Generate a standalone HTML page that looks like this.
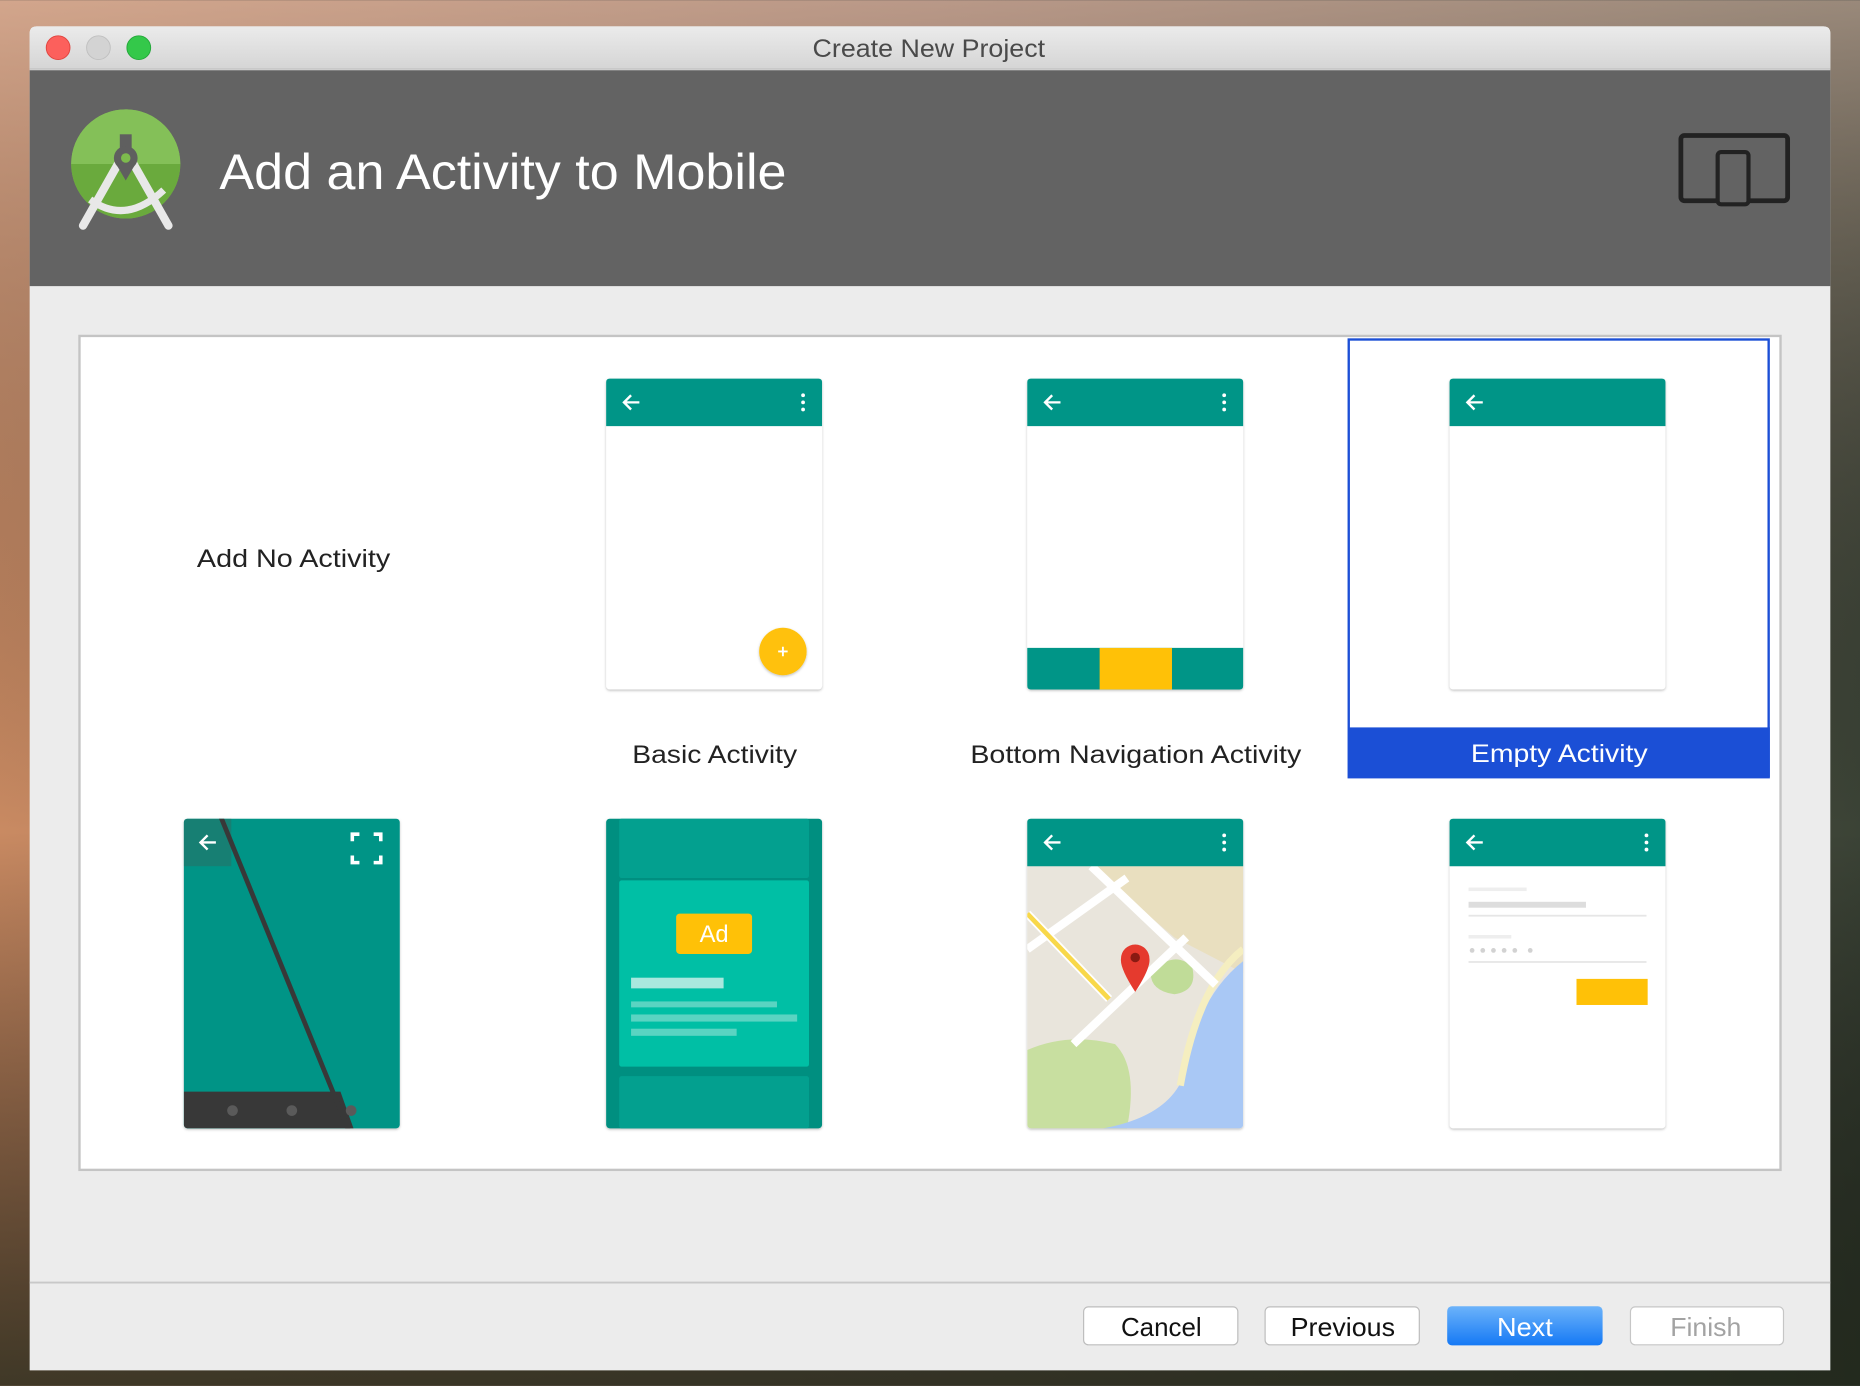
<!DOCTYPE html>
<html><head><meta charset="utf-8"><style>
html,body{margin:0;padding:0;width:1860px;height:1386px;overflow:hidden;background:#555}
svg{display:block}
text{font-family:"Liberation Sans",sans-serif}
</style></head><body>
<svg width="1860" height="1386" viewBox="0 0 1568 1168" xmlns="http://www.w3.org/2000/svg">
<defs>
<linearGradient id="bg" x1="0" y1="0" x2="1" y2="0">
<stop offset="0" stop-color="#c98a62"/><stop offset="0.5" stop-color="#8a6a58"/><stop offset="1" stop-color="#3b4336"/>
</linearGradient>
<linearGradient id="bgv" x1="0" y1="0" x2="0" y2="1">
<stop offset="0" stop-color="#d9b8a8" stop-opacity="0.6"/><stop offset="0.6" stop-color="#000" stop-opacity="0"/><stop offset="1" stop-color="#1d2418" stop-opacity="0.8"/>
</linearGradient>
<linearGradient id="tb" x1="0" y1="0" x2="0" y2="1"><stop offset="0" stop-color="#ebebeb"/><stop offset="1" stop-color="#d5d5d5"/></linearGradient>
<linearGradient id="nx" x1="0" y1="0" x2="0" y2="1"><stop offset="0" stop-color="#6cb3fa"/><stop offset="1" stop-color="#1579f5"/></linearGradient>
<filter id="sh" x="-10%" y="-10%" width="120%" height="120%"><feDropShadow dx="0" dy="1" stdDeviation="1.2" flood-color="#000" flood-opacity="0.25"/></filter>
<clipPath id="c1"><rect x="155" y="690" width="182" height="261" rx="3"/></clipPath>
<clipPath id="c3"><rect x="866" y="690" width="182" height="261" rx="3"/></clipPath>
</defs>
<rect width="1568" height="1168" fill="url(#bg)"/>
<rect width="1568" height="1168" fill="url(#bgv)"/>
<path d="M25,28 Q25,22 31,22 H1537 Q1543,22 1543,28 V1155 H25 Z" fill="#ececec"/>
<path d="M25,28 Q25,22 31,22 H1537 Q1543,22 1543,28 V58 H25 Z" fill="url(#tb)"/>
<line x1="25" y1="58" x2="1543" y2="58" stroke="#bdbdbd"/>
<circle cx="49" cy="40" r="10" fill="#fc605c" stroke="#e0443e" stroke-width="0.8"/>
<circle cx="83" cy="40" r="10" fill="#d3d3d3" stroke="#c0c0c0" stroke-width="0.8"/>
<circle cx="117" cy="40" r="10" fill="#34c84a" stroke="#24a83a" stroke-width="0.8"/>
<text x="685" y="48" font-size="21" fill="#4a4a4a" textLength="196" lengthAdjust="spacingAndGlyphs">Create New Project</text>
<rect x="25" y="59" width="1518" height="182" fill="#636363"/>
<circle cx="106" cy="138" r="46" fill="#7dbb4d"/>
<path d="M60,138 A46,46 0 0 0 152,138 Z" fill="#6aaa3d"/>
<path d="M60,138 A46,46 0 0 1 152,138 Z" fill="#84c058"/>
<path d="M104,130 L70,190" stroke="#e8e8e8" stroke-width="7" stroke-linecap="round"/>
<path d="M108,130 L142,190" stroke="#e8e8e8" stroke-width="7" stroke-linecap="round"/>
<path d="M76,168 Q106,190 138,160" stroke="#e8e8e8" stroke-width="6" fill="none"/>
<rect x="101" y="113" width="10" height="12" fill="#5f5f5f"/>
<circle cx="106" cy="133" r="10" fill="#5f5f5f"/><circle cx="106" cy="133" r="4" fill="#7dbb4d"/>
<path d="M99,140 L106,152 L113,140 Z" fill="#5f5f5f"/>
<text x="185" y="159" font-size="42" fill="#fff" textLength="478" lengthAdjust="spacingAndGlyphs">Add an Activity to Mobile</text>
<rect x="1417" y="114" width="90" height="55" rx="3" fill="none" stroke="#222" stroke-width="4"/>
<rect x="1448" y="128" width="26" height="44" rx="3" fill="#636363" stroke="#222" stroke-width="3.5"/>
<rect x="67" y="283" width="1434" height="703" fill="#fff" stroke="#c4c4c4" stroke-width="2"/>
<rect x="1137" y="286" width="354" height="369" fill="#fff" stroke="#1c4fd6" stroke-width="2"/>
<rect x="1137" y="613" width="355" height="42" fill="#1b4fd6"/>
<text x="1240" y="642" font-size="21" fill="#fff" textLength="149" lengthAdjust="spacingAndGlyphs">Empty Activity</text>
<text x="166" y="478" font-size="21" fill="#222" textLength="163" lengthAdjust="spacingAndGlyphs">Add No Activity</text>
<text x="533" y="643" font-size="21" fill="#222" textLength="139" lengthAdjust="spacingAndGlyphs">Basic Activity</text>
<text x="818" y="643" font-size="21" fill="#222" textLength="279" lengthAdjust="spacingAndGlyphs">Bottom Navigation Activity</text>
<g filter="url(#sh)"><rect x="511" y="319" width="182" height="262" rx="3" fill="#fff"/></g>
<path d="M514,319 H690 Q693,319 693,322 V359 H511 V322 Q511,319 514,319Z" fill="#009587"/>
<path d="M539,339 H526 M532,333 L526,339 L532,345" stroke="#fff" stroke-width="2" fill="none"/>
<g fill="#fff"><circle cx="677" cy="333" r="1.6"/><circle cx="677" cy="339" r="1.6"/><circle cx="677" cy="345" r="1.6"/></g>
<circle cx="660" cy="549" r="20" fill="#ffc107" filter="url(#sh)"/>
<path d="M656,549 H664 M660,545 V553" stroke="#fff" stroke-width="1.6"/>
<g filter="url(#sh)"><rect x="866" y="319" width="182" height="262" rx="3" fill="#fff"/></g>
<path d="M869,319 H1045 Q1048,319 1048,322 V359 H866 V322 Q866,319 869,319Z" fill="#009587"/>
<path d="M894,339 H881 M887,333 L881,339 L887,345" stroke="#fff" stroke-width="2" fill="none"/>
<g fill="#fff"><circle cx="1032" cy="333" r="1.6"/><circle cx="1032" cy="339" r="1.6"/><circle cx="1032" cy="345" r="1.6"/></g>
<path d="M866,546 H1048 V578 Q1048,581 1045,581 H869 Q866,581 866,578Z" fill="#009587"/>
<rect x="927" y="546" width="61" height="35" fill="#ffc107"/>
<g filter="url(#sh)"><rect x="1222" y="319" width="182" height="262" rx="3" fill="#fff"/></g>
<path d="M1225,319 H1401 Q1404,319 1404,322 V359 H1222 V322 Q1222,319 1225,319Z" fill="#009587"/>
<path d="M1250,339 H1237 M1243,333 L1237,339 L1243,345" stroke="#fff" stroke-width="2" fill="none"/>
<g filter="url(#sh)"><rect x="155" y="690" width="182" height="261" rx="3" fill="#049486"/></g>
<g clip-path="url(#c1)">
<rect x="155" y="690" width="40" height="40" fill="#177f73"/>
<path d="M155,920 H287 L298,951 H155Z" fill="#383838"/>
<line x1="186" y1="688" x2="294" y2="953" stroke="#383838" stroke-width="4"/>
<g fill="#5a5a5a"><circle cx="196" cy="936" r="4.5"/><circle cx="246" cy="936" r="4.5"/><circle cx="296" cy="936" r="4.5"/></g>
</g>
<path d="M182,710 H169 M175,704 L169,710 L175,716" stroke="#fff" stroke-width="2" fill="none"/>
<path d="M297,709 V703 H303 M315,703 H321 V709 M321,721 V727 H315 M303,727 H297 V721" stroke="#fff" stroke-width="3" fill="none"/>
<g filter="url(#sh)"><rect x="511" y="690" width="182" height="261" rx="3" fill="#008f80"/></g>
<rect x="522" y="690" width="160" height="50" rx="2" fill="#03a08f"/>
<rect x="522" y="907" width="160" height="44" rx="2" fill="#03a08f"/>
<rect x="522" y="742" width="160" height="157" rx="2" fill="#00bfa5"/>
<rect x="570" y="770" width="64" height="34" rx="3" fill="#ffc107"/>
<text x="602" y="794" font-size="20" fill="#fff" text-anchor="middle">Ad</text>
<rect x="532" y="824" width="78" height="9" fill="#a8e8de"/>
<rect x="532" y="844" width="123" height="5" fill="#5ad4c2"/>
<rect x="532" y="855" width="140" height="6" fill="#5ad4c2"/>
<rect x="532" y="867" width="89" height="6" fill="#5ad4c2"/>
<g filter="url(#sh)"><rect x="866" y="690" width="182" height="261" rx="3" fill="#e9e5dc"/></g>
<g clip-path="url(#c3)">
<path d="M920,730 H1048 V820 L990,790 Z" fill="#e9dfbf"/>
<path d="M866,885 Q900,870 940,880 Q960,900 950,951 H866Z" fill="#c8dfa0"/>
<path d="M1048,810 Q1010,840 1000,900 Q990,940 930,951 H1048Z" fill="#a9c8f5"/>
<path d="M1048,800 Q1010,830 995,915" stroke="#f5eec0" stroke-width="6" fill="none"/>
<path d="M970,820 Q990,800 1005,815 Q1010,835 990,838 Q970,835 970,820Z" fill="#c0dc98"/>
<path d="M920,730 L1025,830 M866,800 L950,740 M866,770 L935,842 M905,880 L1000,790" stroke="#fff" stroke-width="7" fill="none"/>
<path d="M866,770 L935,842" stroke="#f8d84a" stroke-width="4"/>
</g>
<path d="M869,690 H1045 Q1048,690 1048,693 V730 H866 V693 Q866,690 869,690Z" fill="#009587"/>
<path d="M894,710 H881 M887,704 L881,710 L887,716" stroke="#fff" stroke-width="2" fill="none"/>
<g fill="#fff"><circle cx="1032" cy="704" r="1.6"/><circle cx="1032" cy="710" r="1.6"/><circle cx="1032" cy="716" r="1.6"/></g>
<path d="M957,836 Q944,816 945,808 A12,12 0 1 1 969,808 Q970,816 957,836Z" fill="#e53a2e"/>
<circle cx="957" cy="807" r="4" fill="#8a1a12"/>
<g filter="url(#sh)"><rect x="1222" y="690" width="182" height="261" rx="3" fill="#fff"/></g>
<path d="M1225,690 H1401 Q1404,690 1404,693 V730 H1222 V693 Q1222,690 1225,690Z" fill="#009587"/>
<path d="M1250,710 H1237 M1243,704 L1237,710 L1243,716" stroke="#fff" stroke-width="2" fill="none"/>
<g fill="#fff"><circle cx="1388" cy="704" r="1.6"/><circle cx="1388" cy="710" r="1.6"/><circle cx="1388" cy="716" r="1.6"/></g>
<rect x="1238" y="748" width="49" height="3" fill="#eee"/>
<rect x="1238" y="760" width="99" height="5" fill="#ddd"/>
<rect x="1238" y="771" width="150" height="1.5" fill="#e6e6e6"/>
<rect x="1238" y="788" width="36" height="3" fill="#eee"/>
<g fill="#d2d2d2"><circle cx="1241" cy="801" r="2"/><circle cx="1250" cy="801" r="2"/><circle cx="1259" cy="801" r="2"/><circle cx="1268" cy="801" r="2"/><circle cx="1277" cy="801" r="2"/><circle cx="1290" cy="801" r="2"/></g>
<rect x="1238" y="810" width="150" height="1.5" fill="#e6e6e6"/>
<rect x="1329" y="825" width="60" height="22" fill="#ffc107"/>
<line x1="25" y1="1081" x2="1543" y2="1081" stroke="#c8c8c8" stroke-width="1.5"/>
<rect x="913.5" y="1101.5" width="130" height="32" rx="4" fill="#fff" stroke="#bdbdbd"/>
<text x="945" y="1126" font-size="22" fill="#111" textLength="68" lengthAdjust="spacingAndGlyphs">Cancel</text>
<rect x="1066.5" y="1101.5" width="130" height="32" rx="4" fill="#fff" stroke="#bdbdbd"/>
<text x="1088" y="1126" font-size="22" fill="#111" textLength="88" lengthAdjust="spacingAndGlyphs">Previous</text>
<rect x="1220" y="1101" width="131" height="33" rx="4" fill="url(#nx)"/>
<text x="1262" y="1126" font-size="22" fill="#fff" textLength="47" lengthAdjust="spacingAndGlyphs">Next</text>
<rect x="1374.5" y="1101.5" width="129" height="32" rx="4" fill="#fff" stroke="#c6c6c6"/>
<text x="1408" y="1126" font-size="22" fill="#a3a3a3" textLength="60" lengthAdjust="spacingAndGlyphs">Finish</text>
</svg>
</body></html>
